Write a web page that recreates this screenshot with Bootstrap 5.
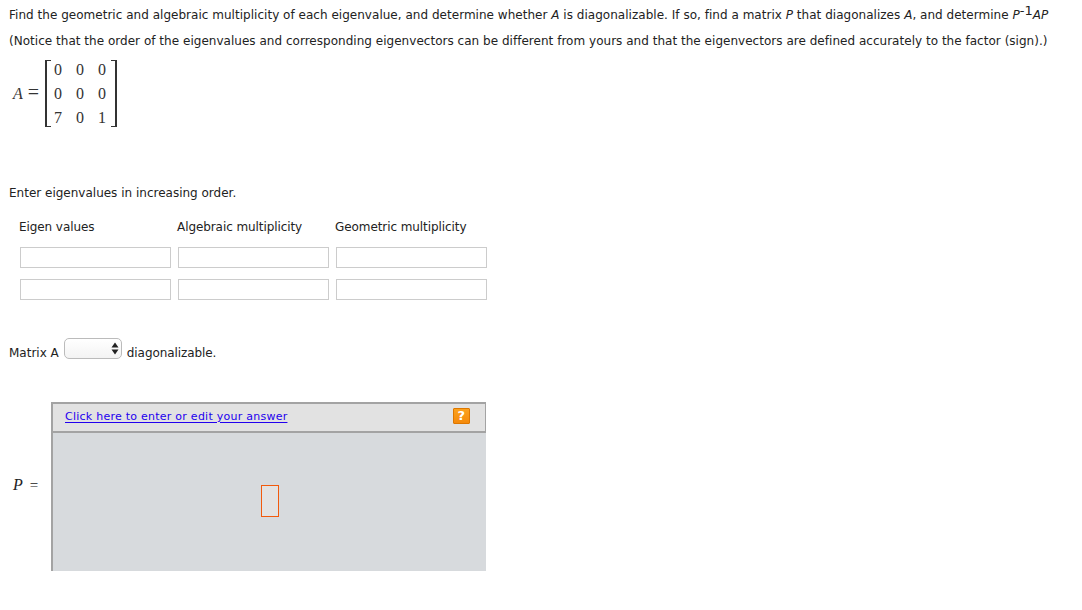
<!DOCTYPE html>
<html lang="en">
<head>
    <meta charset="UTF-8">
    <meta name="viewport" content="width=device-width, initial-scale=1.0">
    <title>Eigenvalues question</title>
    <link href="https://cdn.jsdelivr.net/npm/bootstrap@5.3.0/dist/css/bootstrap.min.css" rel="stylesheet">
    <style>
        body {
            background-color: #fff;
            color: #222;
            font-family: "DejaVu Sans", Verdana, sans-serif;
            font-size: 12px;
            line-height: 16px;
            padding: 7px 0 0 9px;
            white-space: nowrap;
        }
        .q-line { height: 16px; margin-bottom: 10px; letter-spacing: 0.025px; }
        .q-line sup { font-size: 13px; top: -4px; line-height: 0; position: relative; vertical-align: baseline; letter-spacing: 0; }
        /* matrix */
        .mat-wrap { height: 67px; margin: 11px 0 0 4px; font-family: "Liberation Serif", serif; font-size: 16px; color: #333; }
        .mat-lhs { width: 32px; }
        .mat-eq { font-size: 20px; line-height: 0; margin-left: 1px; }
        .mat-body {
            display: grid;
            grid-template-columns: repeat(3, 22px);
            grid-auto-rows: 24px;
            align-content: center;
            width: 72px;
            height: 67px;
            padding: 0 2px;
            text-align: center;
            align-items: center;
            position: relative;
        }
        .mat-body::before, .mat-body::after {
            content: "";
            position: absolute;
            top: 0;
            bottom: 0;
            width: 6px;
            border: 2px solid #333;
            border-width: 1px 0 1px 2px;
        }
        .mat-body::before { left: 0; }
        .mat-body::after { right: 0; transform: scaleX(-1); }
        .hint-line { margin-top: 58px; height: 16px; }
        /* eigen table */
        .eig-table { margin: 18px 0 0 10px; width: 474px; letter-spacing: -0.08px; }
        .eig-head { height: 16px; margin-bottom: 12px; }
        .eig-head > div { width: 158px; }
        .eig-row { margin-bottom: 11px; }
        .eig-row > div { width: 158px; }
        .eig-input {
            display: block;
            width: 151px;
            height: 21px;
            margin-left: 1px;
            border: 1px solid #ccc;
            background: #fff;
        }
        .matrix-line { margin-top: 38px; height: 22px; }
        .matrix-line > span { padding-top: 7px; }
        .matrix-end { letter-spacing: -0.08px; }
        .fake-select {
            width: 58px;
            height: 21px;
            margin: 0 5px;
            border: 1px solid #bbb;
            border-radius: 5px;
            background: linear-gradient(#fff, #f3f3f3);
            position: relative;
        }
        .fake-select svg { position: absolute; right: 2px; top: 3px; }
        /* answer panel */
        .ans-row { margin: 42px 0 0 4px; }
        .ans-label { width: 38px; font-family: "Liberation Serif", serif; font-style: italic; font-size: 16px; padding-top: 75px; color: #222; }
        .ans-label span { font-style: normal; margin-left: 7px; font-size: 15px; }
        .ans-panel { width: 435px; height: 169px; background: #d7dadd; border-left: 2px solid #a3a3a3; }
        .ans-bar {
            height: 31px;
            background: #e2e2e2;
            border: 2px solid #a3a3a3;
            border-width: 2px 1px 2px 0;
            padding: 0 0 2px 12px;
            font-family: "DejaVu Sans", sans-serif;
            font-size: 11px;
            letter-spacing: 0.25px;
        }
        .ans-bar a { color: #2200ee; text-decoration-thickness: 1px; text-underline-offset: 2px; }
        .help-icon {
            width: 17px;
            height: 16px;
            margin: 0 15px 1px 0;
            background: linear-gradient(#fba21f, #f58a0b);
            border: 1px solid #dd7700;
            border-radius: 1px;
            color: #fff;
            font-weight: 700;
            font-size: 13px;
            line-height: 14px;
            text-align: center;
        }
        .slot-box {
            width: 18px;
            height: 32px;
            margin: 52px 0 0 208px;
            background: #e2e2e2;
            border: 1px solid #f25a0c;
        }
    </style>
</head>
<body>
    <div class="q-line">Find the geometric and algebraic multiplicity of each eigenvalue, and determine whether <i>A</i> is diagonalizable. If so, find a matrix <i>P</i> that diagonalizes <i>A</i>, and determine <i>P</i><sup>-1</sup><i>AP</i></div>
    <div class="q-line">(Notice that the order of the eigenvalues and corresponding eigenvectors can be different from yours and that the eigenvectors are defined accurately to the factor (sign).)</div>

    <div class="mat-wrap d-flex align-items-center">
        <div class="mat-lhs"><i>A</i> <span class="mat-eq">=</span></div>
        <div class="mat-body">
            <span>0</span><span>0</span><span>0</span>
            <span>0</span><span>0</span><span>0</span>
            <span>7</span><span>0</span><span>1</span>
        </div>
    </div>

    <div class="hint-line">Enter eigenvalues in increasing order.</div>

    <div class="eig-table">
        <div class="eig-head d-flex">
            <div>Eigen values</div>
            <div>Algebraic multiplicity</div>
            <div>Geometric multiplicity</div>
        </div>
        <div class="eig-row d-flex">
            <div><input class="eig-input" type="text" aria-label="Eigen value 1"></div>
            <div><input class="eig-input" type="text" aria-label="Algebraic multiplicity 1"></div>
            <div><input class="eig-input" type="text" aria-label="Geometric multiplicity 1"></div>
        </div>
        <div class="eig-row d-flex">
            <div><input class="eig-input" type="text" aria-label="Eigen value 2"></div>
            <div><input class="eig-input" type="text" aria-label="Algebraic multiplicity 2"></div>
            <div><input class="eig-input" type="text" aria-label="Geometric multiplicity 2"></div>
        </div>
    </div>

    <div class="matrix-line d-flex">
        <span>Matrix A</span>
        <div class="fake-select">
            <svg width="8" height="13" viewBox="0 0 8 13"><path d="M4 0.5 7.5 5.5H.5zM4 12.5 .5 7.5h7z" fill="#222"/></svg>
        </div>
        <span class="matrix-end">diagonalizable.</span>
    </div>

    <div class="ans-row d-flex">
        <div class="ans-label">P<span>=</span></div>
        <div class="ans-panel">
            <div class="ans-bar d-flex align-items-center justify-content-between">
                <a href="#">Click here to enter or edit your answer</a>
                <div class="help-icon">?</div>
            </div>
            <div class="slot-box"></div>
        </div>
    </div>

    <script src="https://cdn.jsdelivr.net/npm/bootstrap@5.3.0/dist/js/bootstrap.bundle.min.js"></script>
</body>
</html>
